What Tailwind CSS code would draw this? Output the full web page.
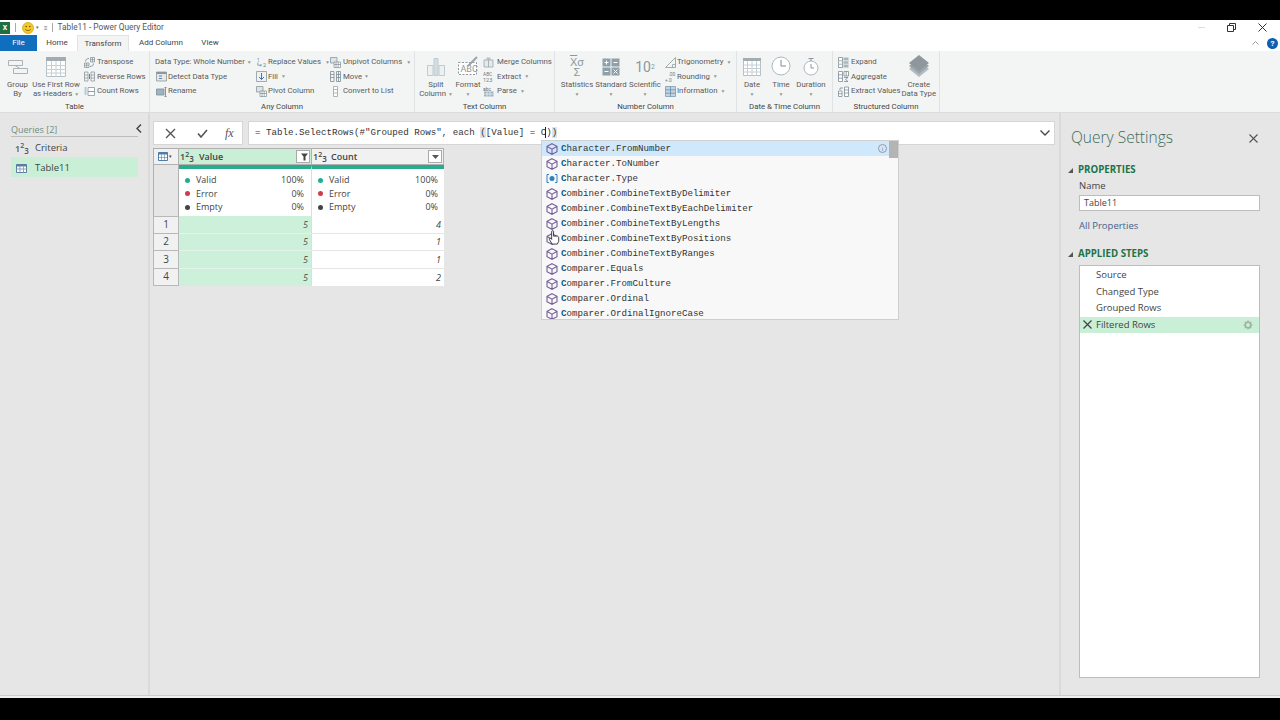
<!DOCTYPE html>
<html lang="en">
<head>
<meta charset="UTF-8">
<title>Table11 - Power Query Editor</title>
<script src="https://cdn.jsdelivr.net/npm/@tailwindcss/browser@4"></script>
</head>
<body class="bg-black">
<svg class="hidden">
  <symbol id="cube" viewBox="0 0 12 12"><path d="M6 .7 11 3.300V8.700L6 11.300 1 8.700V3.300ZM1.200 3.400 6 6.200 10.800 3.400M6 6.200V11" fill="none" stroke="#75609a" stroke-width="1.100"/></symbol>
  <symbol id="transpose" viewBox="0 0 11 11"><path d="M6.500 .5H10.500V5H6.500ZM.5 6H5V10.500H.5ZM8.500.5V5M6.500 2.700H10.500M2.700 6V10.500M.5 8.200H5" fill="none" stroke="#8d979c" stroke-width=".8"/><path d="M1.500 4.500C1.500 2.500 3 1.500 5 1.500M9.500 6.500C9.500 8.500 8 9.500 6 9.500" fill="none" stroke="#5d87a8" stroke-width=".8"/></symbol>
  <symbol id="reverse" viewBox="0 0 11 11"><path d="M.5 1H4V10H.5ZM7 1H10.500V10H7ZM.5 4H4M.5 7H4M7 4H10.500M7 7H10.500" fill="none" stroke="#8d979c" stroke-width=".8"/><path d="M5.500 3V8" stroke="#5d87a8"/></symbol>
  <symbol id="count" viewBox="0 0 11 11"><path d="M4 1.500H10.500V9.500H4Z" fill="#fff" stroke="#8d979c" stroke-width=".8"/><path d="M4 5.500H10.500M.5 2H2.500M.5 4H2.500M.5 6H2.500M.5 8H2.500" stroke="#5d87a8" stroke-width=".8"/></symbol>
  <symbol id="detect" viewBox="0 0 11 11"><path d="M.5 1H10.500V10H.5Z" fill="#e3e8ea" stroke="#8d979c" stroke-width=".8"/><path d="M.5 1H10.500V3H.5Z" fill="#8d979c"/><path d="M3 5H6M3 7.500H6" stroke="#5d87a8"/></symbol>
  <symbol id="rename" viewBox="0 0 11 11"><path d="M.5 3H8V9H.5Z" fill="#9db3c4" stroke="#7e8d96" stroke-width=".8"/><path d="M9.500 1.500V10.500M8.500 1.500H10.500M8.500 10.500H10.500" stroke="#6f7b82" stroke-width=".8"/></symbol>
  <symbol id="replace" viewBox="0 0 12 11"><text x="1" y="4.500" font-size="5" fill="#6f7b82" font-family="Roboto">1</text><text x="7.500" y="10.500" font-size="6" fill="#6f7b82" font-family="Roboto">2</text><path d="M2 5.500V8.500H6M4.800 7.300 6 8.500 4.800 9.700" fill="none" stroke="#5d87a8" stroke-width=".8"/></symbol>
  <symbol id="fill" viewBox="0 0 11 11"><path d="M.5.5H10.500V10.500H.5Z" fill="#eef1f2" stroke="#8d979c" stroke-width=".8"/><path d="M5.500 2V8.500M3 6 5.500 8.500 8 6" fill="none" stroke="#3f78a8"/></symbol>
  <symbol id="pivot" viewBox="0 0 11 11"><path d="M.5.5H7V6H.5Z" fill="#dde3e6" stroke="#8d979c" stroke-width=".8"/><path d="M4 5H10.500V10.500H4ZM6 5V10.500M8.200 5V10.500M4 7.500H10.500" fill="#fff" stroke="#7e8d96" stroke-width=".7"/></symbol>
  <symbol id="move" viewBox="0 0 11 11"><path d="M.5.5H4V10.500H.5ZM6.500.5H10.500V10.500H6.500ZM.5 3.500H4M.5 6.500H4M6.500 3.500H10.500M6.500 6.500H10.500M8.500.5V10.500" fill="none" stroke="#7e8d96" stroke-width=".8"/></symbol>
  <symbol id="convert" viewBox="0 0 11 11"><path d="M3.500.5H7.500V10.500H3.500ZM3.500 3.500H7.500M3.500 7H7.500" fill="#fff" stroke="#9aa4a9" stroke-width=".8"/></symbol>
  <symbol id="merge" viewBox="0 0 11 11"><path d="M1 3H10V10H1ZM5.500 3V10" fill="#e6eaec" stroke="#9aa4a9" stroke-width=".8"/><path d="M3.500 .5H7.500V3H3.500Z" fill="#b8c0c4"/></symbol>
  <symbol id="extract" viewBox="0 0 11 11"><text x="0" y="4.800" font-size="4.800" fill="#6f7b82" font-family="Roboto">ABC</text><text x="0" y="10.500" font-size="5.500" fill="#6f7b82" font-family="Roboto">123</text></symbol>
  <symbol id="parse" viewBox="0 0 11 11"><text x="0" y="4.500" font-size="5" fill="#5d6a72" font-family="Roboto">abc</text><path d="M1 5.500H10.500V10.500H1Z" fill="#9fb4c2"/><path d="M4 5.500V10.500M7 5.500V10.500M1 8H10.500" stroke="#fff" stroke-width=".6"/></symbol>
  <symbol id="trig" viewBox="0 0 11 11"><path d="M.5 10.500 10.500.5V10.500Z" fill="#f3f5f5" stroke="#8d979c" stroke-width=".8"/><path d="M7.500 10.500V7.500H10.500" fill="none" stroke="#8d979c" stroke-width=".7"/></symbol>
  <symbol id="round" viewBox="0 0 11 11"><text x="3.500" y="4.800" font-size="4.800" fill="#6f7b82" font-family="Roboto">.00</text><text x="0" y="10.500" font-size="4.800" fill="#6f7b82" font-family="Roboto">+.0</text></symbol>
  <symbol id="info" viewBox="0 0 11 11"><path d="M.5.5H10.500V10.500H.5Z" fill="#c4d4df" stroke="#7e9cb2" stroke-width=".8"/><path d="M5.500.5V10.500M.5 3.800H10.500M.5 7.200H10.500" stroke="#5d87a8" stroke-width=".7"/></symbol>
  <symbol id="expand" viewBox="0 0 11 11"><path d="M.5.5H4.500V10.500H.5Z" fill="#fff" stroke="#7e8d96" stroke-width=".8"/><path d="M5.500.5H10.500V10.500H5.500Z" fill="#aab5ba"/><path d="M.5 3.800H4.500M.5 7.200H4.500M5.500 3.800H10.500M5.500 7.200H10.500" stroke="#fff" stroke-width=".7"/><path d="M.5 3.800H4.500M.5 7.200H4.500" stroke="#7e8d96" stroke-width=".7"/></symbol>
  <symbol id="aggregate" viewBox="0 0 11 11"><path d="M.5.5H4.500V10.500H.5ZM.5 3.800H4.500M.5 7.200H4.500M6 .5H10.500V5H6ZM8.200.5V5" fill="#fff" stroke="#7e8d96" stroke-width=".8"/><path d="M6 6.500H10L7.500 8.500 10 10.500H6" fill="none" stroke="#6f7b82" stroke-width=".7"/></symbol>
  <symbol id="values" viewBox="0 0 11 11"><path d="M.5 5H4V10.500H.5ZM6.500 1H10.500V10.500H6.500ZM6.500 4H10.500M6.500 7H10.500M.5 7.700H4" fill="#fff" stroke="#7e8d96" stroke-width=".8"/><path d="M2 4V2H5" fill="none" stroke="#7e8d96" stroke-width=".8"/></symbol>
</svg>

<div class="relative mt-[20px] h-[678px] flex flex-col bg-[#e6e6e6] text-[#444] font-['Open_Sans',sans-serif] text-[9px] overflow-hidden">

  <!-- title bar -->
  <div class="h-[15px] bg-white flex items-center shrink-0 font-['Roboto',sans-serif]">
    <div class="w-[10px] h-[12px] bg-[#1d7044] text-white text-[7px] font-bold leading-[12px] text-center">X</div>
    <div class="ml-[5px] w-px h-[9px] bg-[#aaa]"></div>
    <svg class="ml-[6px] w-[12px] h-[12px]" viewBox="0 0 12 12"><circle cx="6" cy="6" r="5.500" fill="#f4c92a" stroke="#d6a514" stroke-width=".8"/><circle cx="4.200" cy="4.500" r=".8" fill="#6b5200"/><circle cx="7.800" cy="4.500" r=".8" fill="#6b5200"/><path d="M3.200 7.200C4.200 9 7.800 9 8.800 7.200" fill="none" stroke="#6b5200" stroke-width=".8"/></svg>
    <div class="ml-[2px] text-[5px] text-[#666]">&#9662;</div>
    <div class="ml-[5px] text-[6px] text-[#666]">&#8801;</div>
    <div class="ml-[4px] w-px h-[9px] bg-[#aaa]"></div>
    <div class="ml-[5px] text-[8.300px] text-[#555]">Table11 - Power Query Editor</div>
    <div class="ml-auto flex items-center">
      <div class="w-[7px] h-px bg-[#ddd] mr-[22px]"></div>
      <svg class="w-[9px] h-[9px] mr-[22px]" viewBox="0 0 9 9"><path d="M.5 2.500H6.500V8.500H.5ZM2.500 2.500V.5H8.500V6.500H6.500" fill="none" stroke="#333"/></svg>
      <svg class="w-[9px] h-[9px] mr-[13px]" viewBox="0 0 9 9"><path d="M.5.5 8.500 8.500M8.500.5.5 8.500" stroke="#333"/></svg>
    </div>
  </div>

  <!-- tabs -->
  <div class="h-[16px] bg-white flex items-stretch shrink-0 text-[8px] font-['Roboto',sans-serif]">
    <div class="w-[37px] bg-[#106ebe] text-white flex items-center justify-center">File</div>
    <div class="w-[40px] flex items-center justify-center">Home</div>
    <div class="w-[52px] bg-[#f3f5f5] border border-b-0 border-[#e3e3e3] flex items-center justify-center">Transform</div>
    <div class="w-[64px] flex items-center justify-center">Add Column</div>
    <div class="w-[34px] flex items-center justify-center">View</div>
    <div class="ml-auto flex items-center">
      <svg class="w-[7px] h-[4px] mr-[8px]" viewBox="0 0 7 4"><path d="M.5 3.500 3.500.5 6.500 3.500" fill="none" stroke="#999"/></svg>
      <div class="w-[11px] h-[11px] rounded-full bg-[#0f5fae] text-white text-[8px] font-bold leading-[11px] text-center mr-[2px]">?</div>
    </div>
  </div>

  <!-- ribbon -->
  <div class="h-[62px] bg-[#f3f5f5] border-b border-[#dcdcdc] flex shrink-0 text-[#5a5a5a] text-[7.800px] font-['Roboto',sans-serif]">

    <!-- Table -->
    <div class="w-[150px] flex flex-col border-r border-[#e0e3e3]">
      <div class="h-[48px] flex pl-[6px]">
        <div class="w-[23px] flex flex-col items-center">
          <svg class="w-[22px] h-[28px]" viewBox="0 0 22 28"><path d="M1.500 9.500H15.500V14.500H1.500ZM6.500 17.500H20.500V22.500H6.500Z" fill="#f3f5f5" stroke="#aab3b8"/><path d="M8 14.500 13 17.500" stroke="#aab3b8"/></svg>
          <div class="mt-px leading-[9px] text-center">Group<br>By</div>
        </div>
        <div class="ml-[4px] w-[46px] flex flex-col items-center">
          <svg class="w-[22px] h-[28px]" viewBox="0 0 22 28"><path d="M1.500 6.500H20.500V25.500H1.500Z" fill="#fff" stroke="#b5c0c6"/><path d="M1 6H21V10H1Z" fill="#a3acb1"/><path d="M1.500 14.500H20.500M1.500 18.500H20.500M1.500 22H20.500M6.500 10V25.500M11 10V25.500M15.500 10V25.500" stroke="#c4d0d6"/></svg>
          <div class="mt-px leading-[9px] text-center whitespace-nowrap">Use First Row<br>as Headers <i class="not-italic text-[5px] text-[#999]">&#9660;</i></div>
        </div>
        <div class="ml-[5px] pt-[4px] flex flex-col">
          <div class="h-[14.500px] flex items-center gap-[2px]"><svg class="w-[11px] h-[11px]"><use href="#transpose"/></svg>Transpose</div>
          <div class="h-[14.500px] flex items-center gap-[2px]"><svg class="w-[11px] h-[11px]"><use href="#reverse"/></svg>Reverse Rows</div>
          <div class="h-[14.500px] flex items-center gap-[2px]"><svg class="w-[11px] h-[11px]"><use href="#count"/></svg>Count Rows</div>
        </div>
      </div>
      <div class="h-[13px] text-center leading-[15px] text-[#444]">Table</div>
    </div>

    <!-- Any Column -->
    <div class="w-[265px] flex flex-col border-r border-[#e0e3e3]">
      <div class="h-[48px] flex pl-[5px] pt-[4px]">
        <div class="w-[100px] flex flex-col">
          <div class="h-[14.500px] flex items-center gap-[2px] whitespace-nowrap">Data Type: Whole Number <i class="not-italic text-[5px] text-[#999]">&#9660;</i></div>
          <div class="h-[14.500px] flex items-center gap-px pl-px"><svg class="w-[11px] h-[11px]"><use href="#detect"/></svg>Detect Data Type</div>
          <div class="h-[14.500px] flex items-center gap-px pl-px"><svg class="w-[11px] h-[11px]"><use href="#rename"/></svg>Rename</div>
        </div>
        <div class="w-[75px] flex flex-col">
          <div class="h-[14.500px] flex items-center gap-px pl-px whitespace-nowrap"><svg class="w-[11px] h-[11px]"><use href="#replace"/></svg>Replace Values <i class="not-italic text-[5px] text-[#999] ml-[3px]">&#9660;</i></div>
          <div class="h-[14.500px] flex items-center gap-px pl-px"><svg class="w-[11px] h-[11px]"><use href="#fill"/></svg>Fill <i class="not-italic text-[5px] text-[#999] ml-[2px]">&#9660;</i></div>
          <div class="h-[14.500px] flex items-center gap-px pl-px"><svg class="w-[11px] h-[11px]"><use href="#pivot"/></svg>Pivot Column</div>
        </div>
        <div class="flex flex-col">
          <div class="h-[14.500px] flex items-center gap-[2px] whitespace-nowrap"><svg class="w-[11px] h-[11px]"><use href="#pivot"/></svg>Unpivot Columns <i class="not-italic text-[5px] text-[#999] ml-[2px]">&#9660;</i></div>
          <div class="h-[14.500px] flex items-center gap-[2px]"><svg class="w-[11px] h-[11px]"><use href="#move"/></svg>Move <i class="not-italic text-[5px] text-[#999]">&#9660;</i></div>
          <div class="h-[14.500px] flex items-center gap-[2px]"><svg class="w-[11px] h-[11px]"><use href="#convert"/></svg>Convert to List</div>
        </div>
      </div>
      <div class="h-[13px] text-center leading-[15px] text-[#444]">Any Column</div>
    </div>

    <!-- Text Column -->
    <div class="w-[140px] flex flex-col border-r border-[#e0e3e3]">
      <div class="h-[48px] flex pl-[4px]">
        <div class="w-[34px] flex flex-col items-center">
          <svg class="w-[22px] h-[28px]" viewBox="0 0 22 28"><path d="M2.500 14.500H8V24.500H2.500ZM14 14.500H19.500V24.500H14Z" fill="#eef1f2" stroke="#c0cbd1"/><path d="M9 7.500H13V24.500H9Z" fill="#d5dde1" stroke="#c0cbd1"/></svg>
          <div class="mt-px leading-[9px] text-center whitespace-nowrap">Split<br>Column <i class="not-italic text-[5px] text-[#999]">&#9660;</i></div>
        </div>
        <div class="w-[30px] flex flex-col items-center">
          <svg class="w-[22px] h-[28px]" viewBox="0 0 22 28"><path d="M1.500 11.500H19.500V23.500H1.500Z" fill="#fff" stroke="#8d979c" stroke-dasharray="2 1.500"/><text x="3.500" y="21" font-size="9" fill="#8d979c" font-family="Roboto">ABC</text><path d="M11 15 20 6" stroke="#9aa4a9" stroke-width="2"/></svg>
          <div class="mt-px leading-[9px] text-center">Format<br><i class="not-italic text-[5px] text-[#999]">&#9660;</i></div>
        </div>
        <div class="pt-[4px] flex flex-col">
          <div class="h-[14.500px] flex items-center gap-[3px] whitespace-nowrap"><svg class="w-[11px] h-[11px]"><use href="#merge"/></svg>Merge Columns</div>
          <div class="h-[14.500px] flex items-center gap-[3px]"><svg class="w-[11px] h-[11px]"><use href="#extract"/></svg>Extract <i class="not-italic text-[5px] text-[#999]">&#9660;</i></div>
          <div class="h-[14.500px] flex items-center gap-[3px]"><svg class="w-[11px] h-[11px]"><use href="#parse"/></svg>Parse <i class="not-italic text-[5px] text-[#999]">&#9660;</i></div>
        </div>
      </div>
      <div class="h-[13px] text-center leading-[15px] text-[#444]">Text Column</div>
    </div>

    <!-- Number Column -->
    <div class="w-[182px] flex flex-col border-r border-[#e0e3e3]">
      <div class="h-[48px] flex pl-[5px]">
        <div class="w-[34px] flex flex-col items-center">
          <div class="h-[28px] pt-[6px] text-[#8d979c] text-[11px] leading-[10px] text-center font-['Liberation_Sans',sans-serif]"><span class="overline">X</span>&#963;<br>&#931;</div>
          <div class="mt-px leading-[9px] text-center">Statistics<br><i class="not-italic text-[5px] text-[#999]">&#9660;</i></div>
        </div>
        <div class="w-[34px] flex flex-col items-center">
          <svg class="w-[18px] h-[28px]" viewBox="0 0 18 28"><path d="M.5 7.500H8.500V15.500H.5ZM9.500 7.500H17.500V15.500H9.500ZM.5 16.500H8.500V24.500H.5ZM9.500 16.500H17.500V24.500H9.500Z" fill="#8fa0a8"/><path d="M2.500 11.500H6.500M4.500 9.500V13.500M11.500 11.500H15.500M2.500 20.500H6.500M11.500 18.500 15.500 22.500M15.500 18.500 11.500 22.500" stroke="#fff"/></svg>
          <div class="mt-px leading-[9px] text-center">Standard<br><i class="not-italic text-[5px] text-[#999]">&#9660;</i></div>
        </div>
        <div class="w-[34px] flex flex-col items-center">
          <div class="h-[28px] pt-[7px] text-[#8d979c] text-[14px] leading-[18px]">10<sup class="text-[7px]">2</sup></div>
          <div class="mt-px leading-[9px] text-center">Scientific<br><i class="not-italic text-[5px] text-[#999]">&#9660;</i></div>
        </div>
        <div class="ml-[3px] pt-[4px] flex flex-col">
          <div class="h-[14.500px] flex items-center gap-px whitespace-nowrap"><svg class="w-[11px] h-[11px]"><use href="#trig"/></svg>Trigonometry <i class="not-italic text-[5px] text-[#999] ml-[2px]">&#9660;</i></div>
          <div class="h-[14.500px] flex items-center gap-px"><svg class="w-[11px] h-[11px]"><use href="#round"/></svg>Rounding <i class="not-italic text-[5px] text-[#999] ml-[2px]">&#9660;</i></div>
          <div class="h-[14.500px] flex items-center gap-px"><svg class="w-[11px] h-[11px]"><use href="#info"/></svg>Information <i class="not-italic text-[5px] text-[#999] ml-[2px]">&#9660;</i></div>
        </div>
      </div>
      <div class="h-[13px] text-center leading-[15px] text-[#444]">Number Column</div>
    </div>

    <!-- Date & Time Column -->
    <div class="w-[96px] flex flex-col border-r border-[#e0e3e3]">
      <div class="h-[48px] flex">
        <div class="w-[30px] flex flex-col items-center">
          <svg class="w-[18px] h-[28px]" viewBox="0 0 18 28"><path d="M.5 7.500H17.500V24.500H.5Z" fill="#fff" stroke="#b5c0c6"/><path d="M0 7H18V10H0Z" fill="#a3acb1"/><path d="M.5 14H17.500M.5 17.500H17.500M.5 21H17.500M4.500 10V24.500M9 10V24.500M13.500 10V24.500" stroke="#c4d0d6"/></svg>
          <div class="mt-px leading-[9px] text-center">Date<br><i class="not-italic text-[5px] text-[#999]">&#9660;</i></div>
        </div>
        <div class="w-[28px] flex flex-col items-center">
          <svg class="w-[20px] h-[28px]" viewBox="0 0 20 28"><circle cx="10" cy="15" r="9" fill="#fff" stroke="#a9b8c0"/><path d="M10 9V15H15" fill="none" stroke="#7f8b91"/></svg>
          <div class="mt-px leading-[9px] text-center">Time<br><i class="not-italic text-[5px] text-[#999]">&#9660;</i></div>
        </div>
        <div class="w-[32px] flex flex-col items-center">
          <svg class="w-[16px] h-[28px]" viewBox="0 0 16 28"><circle cx="8" cy="17" r="7" fill="#fff" stroke="#a9b8c0"/><path d="M5.500 7.500H10.500M8 7.500V10M8 13V17H11" fill="none" stroke="#8d979c"/></svg>
          <div class="mt-px leading-[9px] text-center">Duration<br><i class="not-italic text-[5px] text-[#999]">&#9660;</i></div>
        </div>
      </div>
      <div class="h-[13px] text-center leading-[15px] text-[#444]">Date &amp; Time Column</div>
    </div>

    <!-- Structured Column -->
    <div class="w-[107px] flex flex-col border-r border-[#e0e3e3]">
      <div class="h-[48px] flex pl-[5px]">
        <div class="pt-[4px] flex flex-col">
          <div class="h-[14.500px] flex items-center gap-[2px]"><svg class="w-[11px] h-[11px]"><use href="#expand"/></svg>Expand</div>
          <div class="h-[14.500px] flex items-center gap-[2px]"><svg class="w-[11px] h-[11px]"><use href="#aggregate"/></svg>Aggregate</div>
          <div class="h-[14.500px] flex items-center gap-[2px] whitespace-nowrap"><svg class="w-[11px] h-[11px]"><use href="#values"/></svg>Extract Values</div>
        </div>
        <div class="ml-auto mr-[2px] w-[38px] flex flex-col items-center">
          <svg class="w-[22px] h-[28px]" viewBox="0 0 22 28"><path d="M1 18 11 26 21 18 11 10Z" fill="#b3bcc1"/><path d="M1 15 11 23 21 15 11 7Z" fill="#9aa4a9"/><path d="M1 12 11 20 21 12 11 4Z" fill="#8d979c"/></svg>
          <div class="mt-px leading-[9px] text-center whitespace-nowrap">Create<br>Data Type</div>
        </div>
      </div>
      <div class="h-[13px] text-center leading-[15px] text-[#444]">Structured Column</div>
    </div>
  </div>

  <!-- main -->
  <div class="flex-1 flex min-h-0">

    <!-- queries pane -->
    <div class="w-[150px] shrink-0 border-r-2 border-[#dadada] pl-[11px] pr-[10px] pt-[10px]">
      <div class="h-[14px] flex items-center justify-between border-b border-[#bdbdbd] text-[#6f8f80] text-[9px]">
        <span>Queries [2]</span>
        <svg class="w-[6px] h-[9px] -mt-[3px] -mr-[4px]" viewBox="0 0 6 9"><path d="M5 .5 1 4.500 5 8.500" fill="none" stroke="#444" stroke-width="1.500"/></svg>
      </div>
      <div class="h-[20px] pt-[2px] flex items-center text-[9.500px]">
        <span class="w-[24px] pl-[4px] text-[9px] font-semibold text-[#555] leading-none">1<sup class="text-[7px]">2</sup><sub class="text-[8px]">3</sub></span>Criteria
      </div>
      <div class="h-[20px] pt-[2px] flex items-center text-[9.500px] bg-[#c9efd7]">
        <svg class="w-[11px] h-[11px] ml-[5px] mr-[8px]" viewBox="0 0 11 11"><path d="M.5 1.500H10.500V9.500H.5Z" fill="#fff" stroke="#5b7f9e"/><path d="M.5 1.500H10.500V3.500H.5Z" fill="#5b7f9e"/><path d="M.5 6H10.500M4 3.500V9.500M7.500 3.500V9.500" stroke="#8aa4ba"/></svg>
        Table11
      </div>
    </div>

    <!-- centre -->
    <div class="relative flex-1 min-w-0 pl-[3px] pt-[8px]">
      <!-- formula bar -->
      <div class="flex h-[24px] gap-[5px] pr-[4px]">
        <div class="w-[90px] bg-white border border-[#d5d5d5] flex items-center">
          <svg class="w-[11px] h-[11px] ml-[11px]" viewBox="0 0 11 11"><path d="M1 1 10 10M10 1 1 10" stroke="#555" stroke-width="1.400"/></svg>
          <svg class="w-[11px] h-[9px] ml-[21px]" viewBox="0 0 11 9"><path d="M1 4.500 4 8 10 1" fill="none" stroke="#555" stroke-width="1.600"/></svg>
          <span class="ml-[17px] font-['Liberation_Serif',serif] italic text-[12px] text-[#555]">fx</span>
        </div>
        <div class="flex-1 bg-white border border-[#d5d5d5] flex items-center pl-[6px] font-['Liberation_Mono',monospace] text-[9.170px] text-[#333] whitespace-pre">
          <span>= Table.SelectRows(#"Grouped Rows", each <span class="bg-[#e2e2e2]">(</span>[Value] = C<span class="inline-block w-px h-[11px] bg-[#222] align-middle -ml-px"></span>)<span class="bg-[#e2e2e2]">)</span></span>
          <svg class="w-[10px] h-[6px] ml-auto mr-[4px]" viewBox="0 0 10 6"><path d="M.5.5 5 5 9.500.5" fill="none" stroke="#444" stroke-width="1.300"/></svg>
        </div>
      </div>

      <!-- data table -->
      <div class="mt-[3px] w-[291px] grid grid-cols-[26px_133px_132px] text-[9px]">
        <div class="h-[17px] bg-[#f1f1f1] border border-[#b0b0b0] flex items-center pl-[4px]">
          <svg class="w-[10px] h-[9px]" viewBox="0 0 10 9"><path d="M.5.5H9.500V8.500H.5Z" fill="#fff" stroke="#4d7ea8"/><path d="M.5.5H9.500V2.500H.5Z" fill="#4d7ea8"/><path d="M.5 5.500H9.500M3.500 2.500V8.500M6.500 2.500V8.500" stroke="#4d7ea8" stroke-width=".6"/></svg>
          <span class="text-[5px] ml-px">&#9662;</span>
        </div>
        <div class="h-[17px] bg-[#c9efd7] border-y border-r border-[#b0b0b0] flex items-center pl-[1px] font-semibold">
          <span class="w-[19px] text-[9px] font-semibold leading-none">1<sup class="text-[7px]">2</sup><sub class="text-[8px]">3</sub></span>Value
          <span class="ml-auto mr-px w-[14px] h-[13px] bg-white border border-[#aaa] flex items-center justify-center">
            <svg class="w-[9px] h-[8px]" viewBox="0 0 9 8"><path d="M2 .5H9L6.500 3.500V7.500H4.500V3.500Z" fill="#444"/></svg>
          </span>
        </div>
        <div class="h-[17px] bg-[#f1f1f1] border-y border-r border-[#b0b0b0] flex items-center pl-[1px] font-semibold">
          <span class="w-[18px] text-[9px] font-semibold leading-none">1<sup class="text-[7px]">2</sup><sub class="text-[8px]">3</sub></span>Count
          <span class="ml-auto mr-px w-[14px] h-[13px] bg-white border border-[#aaa] flex items-center justify-center">
            <svg class="w-[7px] h-[4px]" viewBox="0 0 7 4"><path d="M0 0H7L3.500 4Z" fill="#555"/></svg>
          </span>
        </div>

        <div class="bg-[#e6e6e6] border-x border-[#b0b0b0]"></div>
        <div class="border-t-[4px] border-[#2aab8e] bg-white h-[51px] flex flex-col justify-center pl-[6px] pr-[7px] pt-[2px] text-[9px] leading-[13.500px] border-r border-r-[#ddd]">
          <div class="flex items-center"><span class="w-[5px] h-[5px] rounded-full bg-[#1fae95] mr-[6px]"></span>Valid<span class="ml-auto">100%</span></div>
          <div class="flex items-center"><span class="w-[5px] h-[5px] rounded-full bg-[#d13a4a] mr-[6px]"></span>Error<span class="ml-auto">0%</span></div>
          <div class="flex items-center"><span class="w-[5px] h-[5px] rounded-full bg-[#444] mr-[6px]"></span>Empty<span class="ml-auto">0%</span></div>
        </div>
        <div class="border-t-[4px] border-[#2aab8e] bg-white h-[51px] flex flex-col justify-center px-[6px] pt-[2px] text-[9px] leading-[13.500px]">
          <div class="flex items-center"><span class="w-[5px] h-[5px] rounded-full bg-[#1fae95] mr-[6px]"></span>Valid<span class="ml-auto">100%</span></div>
          <div class="flex items-center"><span class="w-[5px] h-[5px] rounded-full bg-[#d13a4a] mr-[6px]"></span>Error<span class="ml-auto">0%</span></div>
          <div class="flex items-center"><span class="w-[5px] h-[5px] rounded-full bg-[#444] mr-[6px]"></span>Empty<span class="ml-auto">0%</span></div>
        </div>

        <div class="h-[17.500px] bg-[#f1f1f1] border border-[#b8b8b8] flex items-center justify-center text-[10px]">1</div>
        <div class="h-[17.500px] bg-[#cdf0da] border-b border-[#e3f3e9] border-r-[#ddd] border-r flex items-center justify-end pr-[3px] italic">5</div>
        <div class="h-[17.500px] bg-white border-b border-[#e6e6e6] flex items-center justify-end pr-[3px] italic">4</div>
        <div class="h-[17.500px] bg-[#f1f1f1] border-x border-b border-[#b8b8b8] flex items-center justify-center text-[10px]">2</div>
        <div class="h-[17.500px] bg-[#cdf0da] border-b border-[#e3f3e9] border-r-[#ddd] border-r flex items-center justify-end pr-[3px] italic">5</div>
        <div class="h-[17.500px] bg-white border-b border-[#e6e6e6] flex items-center justify-end pr-[3px] italic">1</div>
        <div class="h-[17.500px] bg-[#f1f1f1] border-x border-b border-[#b8b8b8] flex items-center justify-center text-[10px]">3</div>
        <div class="h-[17.500px] bg-[#cdf0da] border-b border-[#e3f3e9] border-r-[#ddd] border-r flex items-center justify-end pr-[3px] italic">5</div>
        <div class="h-[17.500px] bg-white border-b border-[#e6e6e6] flex items-center justify-end pr-[3px] italic">1</div>
        <div class="h-[17.500px] bg-[#f1f1f1] border-x border-b border-[#b8b8b8] flex items-center justify-center text-[10px]">4</div>
        <div class="h-[17.500px] bg-[#cdf0da] border-r-[#ddd] border-r flex items-center justify-end pr-[3px] italic">5</div>
        <div class="h-[17.500px] bg-white flex items-center justify-end pr-[3px] italic">2</div>
      </div>

      <!-- autocomplete popup -->
      <div class="absolute left-[391px] top-[27px] w-[358px] h-[180px] bg-[#f8f8f8] border border-[#cfcfcf] overflow-hidden font-['Liberation_Mono',monospace] text-[9.170px] text-[#333] flex">
        <div class="flex-1 min-w-0">
          <div class="h-[15px] bg-[#cfe8fc] flex items-center pl-[4px] gap-[3px]"><svg class="w-[12px] h-[12px]"><use href="#cube"/></svg><span><b class="text-[#0b5a8a]">C</b>haracter.FromNumber</span>
            <span class="ml-auto mr-[2px] w-[9px] h-[9px] rounded-full border border-[#999] text-[6px] leading-[8px] text-center text-[#777] font-['Open_Sans',sans-serif]">i</span></div>
          <div class="h-[15px] flex items-center pl-[4px] gap-[3px]"><svg class="w-[12px] h-[12px]"><use href="#cube"/></svg><span><b class="text-[#0b5a8a]">C</b>haracter.ToNumber</span></div>
          <div class="h-[15px] flex items-center pl-[4px] gap-[3px]"><svg class="w-[12px] h-[9px]" viewBox="0 0 12 9"><path d="M3 .5H1V8.500H3M9 .5H11V8.500H9" fill="none" stroke="#2f7fc1"/><circle cx="6" cy="4.500" r="2.500" fill="#2f7fc1"/></svg><span><b class="text-[#0b5a8a]">C</b>haracter.Type</span></div>
          <div class="h-[15px] flex items-center pl-[4px] gap-[3px]"><svg class="w-[12px] h-[12px]"><use href="#cube"/></svg><span><b class="text-[#0b5a8a]">C</b>ombiner.CombineTextByDelimiter</span></div>
          <div class="h-[15px] flex items-center pl-[4px] gap-[3px]"><svg class="w-[12px] h-[12px]"><use href="#cube"/></svg><span><b class="text-[#0b5a8a]">C</b>ombiner.CombineTextByEachDelimiter</span></div>
          <div class="h-[15px] flex items-center pl-[4px] gap-[3px]"><svg class="w-[12px] h-[12px]"><use href="#cube"/></svg><span><b class="text-[#0b5a8a]">C</b>ombiner.CombineTextByLengths</span></div>
          <div class="h-[15px] flex items-center pl-[4px] gap-[3px]"><svg class="w-[12px] h-[12px]"><use href="#cube"/></svg><span><b class="text-[#0b5a8a]">C</b>ombiner.CombineTextByPositions</span></div>
          <div class="h-[15px] flex items-center pl-[4px] gap-[3px]"><svg class="w-[12px] h-[12px]"><use href="#cube"/></svg><span><b class="text-[#0b5a8a]">C</b>ombiner.CombineTextByRanges</span></div>
          <div class="h-[15px] flex items-center pl-[4px] gap-[3px]"><svg class="w-[12px] h-[12px]"><use href="#cube"/></svg><span><b class="text-[#0b5a8a]">C</b>omparer.Equals</span></div>
          <div class="h-[15px] flex items-center pl-[4px] gap-[3px]"><svg class="w-[12px] h-[12px]"><use href="#cube"/></svg><span><b class="text-[#0b5a8a]">C</b>omparer.FromCulture</span></div>
          <div class="h-[15px] flex items-center pl-[4px] gap-[3px]"><svg class="w-[12px] h-[12px]"><use href="#cube"/></svg><span><b class="text-[#0b5a8a]">C</b>omparer.Ordinal</span></div>
          <div class="h-[15px] flex items-center pl-[4px] gap-[3px]"><svg class="w-[12px] h-[12px]"><use href="#cube"/></svg><span><b class="text-[#0b5a8a]">C</b>omparer.OrdinalIgnoreCase</span></div>
        </div>
        <div class="w-[9px] bg-[#f8f8f8]"><div class="h-[17px] bg-[#b4b4b4]"></div></div>
      </div>

      <!-- mouse pointer -->
      <svg class="absolute left-[398px] top-[117px] w-[12px] h-[15px]" viewBox="0 0 12 16"><path d="M3.500 1.500C3.500.5 5.500.5 5.500 1.500V6.500H9.500C10.500 6.500 11 7.500 11 8.500V12L9.500 15H4L1 10C.5 9 2 8 3.500 10Z" fill="#fff" stroke="#222" stroke-width=".9"/></svg>
    </div>

    <!-- query settings -->
    <div class="w-[221px] shrink-0 border-l-2 border-[#dadada] pl-[10px] pr-[19px]">
      <div class="h-[48px] pt-[2px] flex items-center justify-between text-[15.500px] font-light text-[#3f6b5a]">
        Query Settings
        <svg class="w-[9px] h-[9px] mr-[3px]" viewBox="0 0 9 9"><path d="M.5.5 8.500 8.500M8.500.5.5 8.500" stroke="#555" stroke-width="1.100"/></svg>
      </div>
      <div class="h-[16px] pt-[2px] flex items-center text-[9.700px] font-bold text-[#217346] -ml-[3px]">
        <svg class="w-[5px] h-[5px] mr-[5px]" viewBox="0 0 5 5"><path d="M5 0V5H0Z" fill="#555"/></svg>PROPERTIES
      </div>
      <div class="pl-[8px] text-[9.500px]">
        <div class="h-[18px] flex items-center">Name</div>
        <div class="h-[16px] w-[181px] bg-white border border-[#bdbdbd] flex items-center pl-[4px] text-[9px]">Table11</div>
        <div class="h-[28px] pt-[2px] flex items-center text-[#44618e]">All Properties</div>
      </div>
      <div class="mt-[6px] h-[16px] pt-[2px] flex items-center text-[9.700px] font-bold text-[#217346] -ml-[3px]">
        <svg class="w-[5px] h-[5px] mr-[5px]" viewBox="0 0 5 5"><path d="M5 0V5H0Z" fill="#555"/></svg>APPLIED STEPS
      </div>
      <div class="ml-[8px] mt-[4px] w-[181px] h-[413px] bg-white border border-[#bdbdbd] pt-[1px] text-[9.500px]">
        <div class="h-[16.500px] flex items-center pl-[16px]">Source</div>
        <div class="h-[16.500px] flex items-center pl-[16px]">Changed Type</div>
        <div class="h-[16.500px] flex items-center pl-[16px]">Grouped Rows</div>
        <div class="h-[16.500px] flex items-center bg-[#c9efd7] pl-[3px]">
          <svg class="w-[9px] h-[9px] mr-[4px]" viewBox="0 0 9 9"><path d="M.5.5 8.500 8.500M8.500.5.5 8.500" stroke="#444" stroke-width="1.200"/></svg>
          Filtered Rows
          <svg class="w-[10px] h-[10px] ml-auto mr-[6px]" viewBox="0 0 10 10"><circle cx="5" cy="5" r="2.800" fill="none" stroke="#9fb3a6" stroke-width="1.800"/><path d="M5 .5V2M5 8V9.500M.5 5H2M8 5H9.500M1.800 1.800 2.900 2.900M7.100 7.100 8.200 8.200M8.200 1.800 7.100 2.900M2.900 7.100 1.800 8.200" stroke="#9fb3a6" stroke-width="1.200"/></svg>
        </div>
      </div>
    </div>
  </div>

  <!-- status strip -->
  <div class="h-[3px] shrink-0 bg-[#f0f0f0] border-t border-[#cccccc]"></div>
</div>
</body>
</html>
